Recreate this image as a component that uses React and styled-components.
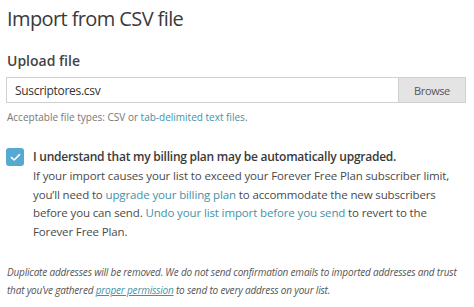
import React from 'react';
import styled, { createGlobalStyle } from 'styled-components';

const GlobalStyle = createGlobalStyle`
  body {
    margin: 0;
    background: #ffffff;
    font-family: 'Open Sans', 'Noto Sans', sans-serif;
    color: #444;
  }
`;

const Page = styled.div`
  padding: 5px 4px 0 6px;
  width: 474px;
  box-sizing: border-box;
`;

const Title = styled.h1`
  margin: 0 0 0 1px;
  font-size: 20px;
  letter-spacing: -0.6px;
  line-height: 28px;
  font-weight: 400;
  color: #3a3a3a;
`;

const Label = styled.div`
  margin: 19px 0 7px 1px;
  font-size: 14px;
  line-height: 18px;
  font-weight: 600;
  color: #444;
`;

const FileRow = styled.div`
  display: flex;
  width: 460px;
  height: 26px;
  box-sizing: border-box;
  border: 1px solid #d0d0d0;
`;

const FileName = styled.div`
  flex: 1;
  display: flex;
  align-items: center;
  padding-left: 8px;
  font-size: 12px;
  letter-spacing: -0.3px;
  color: #333;
  background: #fff;
`;

const BrowseButton = styled.button`
  width: 67px;
  border: 0;
  border-left: 1px solid #d0d0d0;
  background: #e4e4e4;
  font-family: inherit;
  font-size: 11px;
  letter-spacing: -0.4px;
  color: #555;
  padding: 0;
`;

const Helper = styled.div`
  margin: 6px 0 0 1px;
  font-size: 10px;
  line-height: 16px;
  color: #777;
`;

const Link = styled.a`
  color: #3f93a8;
  text-decoration: ${(p) => (p.underline ? 'underline' : 'none')};
`;

const CheckRow = styled.div`
  display: flex;
  gap: 9px;
  margin-top: 23px;
`;

const Box = styled.div`
  flex: none;
  width: 18px;
  height: 18px;
  border-radius: 3px;
  background: #56a9d0;
  display: flex;
  align-items: center;
  justify-content: center;
`;

const CheckText = styled.div`
  color: #4a4a4a;
`;

const Strong = styled.div`
  font-size: 12px;
  letter-spacing: -0.25px;
  font-weight: 600;
  line-height: 18px;
  color: #3a3a3a;
`;

const Body = styled.p`
  margin: 1px 0 0;
  font-size: 11.5px;
  letter-spacing: -0.13px;
  line-height: 18.5px;
  white-space: nowrap;
`;

const Footer = styled.p`
  margin: 22px 0 0 1px;
  font-size: 10px;
  letter-spacing: -0.19px;
  line-height: 18px;
  font-style: italic;
  color: #555;
  white-space: nowrap;
`;

export default function App() {
  return (
    <>
      <GlobalStyle />
      <Page>
        <Title>Import from CSV file</Title>
        <Label>Upload file</Label>
        <FileRow>
          <FileName>Suscriptores.csv</FileName>
          <BrowseButton>Browse</BrowseButton>
        </FileRow>
        <Helper>
          Acceptable file types: CSV or <Link href="#">tab-delimited text files</Link>.
        </Helper>
        <CheckRow>
          <Box>
            <svg width="11" height="9" viewBox="0 0 11 9">
              <path d="M1.5 4.6 L4.2 7 L9.5 1.6" fill="none" stroke="#fff" strokeWidth="1.6" strokeLinecap="round" strokeLinejoin="round" />
            </svg>
          </Box>
          <CheckText>
            <Strong>I understand that my billing plan may be automatically upgraded.</Strong>
            <Body>
              If your import causes your list to exceed your Forever Free Plan subscriber limit,
              <br />
              you’ll need to <Link href="#">upgrade your billing plan</Link> to accommodate the new subscribers
              <br />
              before you can send. <Link href="#">Undo your list import before you send</Link> to revert to the
              <br />
              Forever Free Plan.
            </Body>
          </CheckText>
        </CheckRow>
        <Footer>
          Duplicate addresses will be removed. We do not send confirmation emails to imported addresses and trust
          <br />
          that you’ve gathered <Link href="#" underline>proper permission</Link> to send to every address on your list.
        </Footer>
      </Page>
    </>
  );
}
